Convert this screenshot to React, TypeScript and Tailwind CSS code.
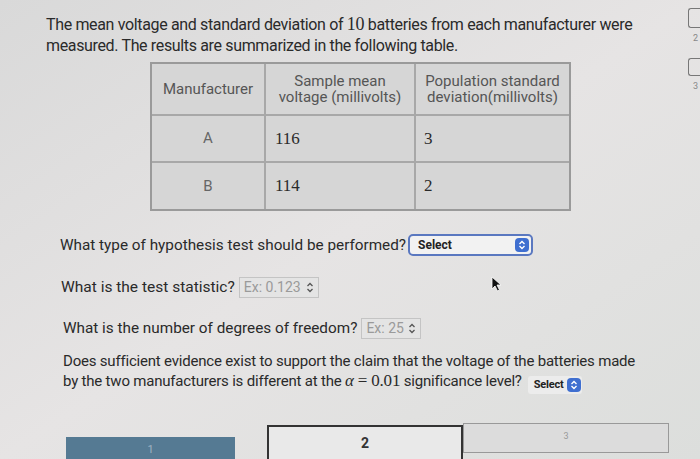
import React from "react";

function Stepper() {
  return (
    <svg width="8" height="11" viewBox="0 0 8 11" className="ml-1 shrink-0">
      <path d="M1.5 4 L4 1.5 L6.5 4" fill="none" stroke="#555" strokeWidth="1.3" />
      <path d="M1.5 7 L4 9.5 L6.5 7" fill="none" stroke="#555" strokeWidth="1.3" />
    </svg>
  );
}

function BlueStepper({ size = 14 }: { size?: number }) {
  return (
    <span
      className="flex items-center justify-center rounded-[4px] bg-[#3f6fd0]"
      style={{ width: size, height: size }}
    >
      <svg width="8" height="10" viewBox="0 0 8 10">
        <path d="M1.5 4 L4 1.5 L6.5 4" fill="none" stroke="#fff" strokeWidth="1.4" />
        <path d="M1.5 6 L4 8.5 L6.5 6" fill="none" stroke="#fff" strokeWidth="1.4" />
      </svg>
    </span>
  );
}

function NumInput({ placeholder, width }: { placeholder: string; width: string }) {
  return (
    <span
      className={`ml-1 inline-flex h-[21px] items-center border border-[#c4c4c4] bg-[#e4e4e4] px-1 text-[14px] text-[#9a9a9a] ${width}`}
    >
      <span className="flex-1">{placeholder}</span>
      <Stepper />
    </span>
  );
}

const serif = { fontFamily: '"Liberation Serif", "DejaVu Serif", serif' };

export default function App() {
  return (
    <div
      className="relative h-[459px] w-[700px] overflow-hidden bg-gradient-to-br from-[#d9d9d9] via-[#e6e4e4] to-[#dcdedc] text-[#2a2a2a]"
      style={{ fontFamily: 'Roboto, "Liberation Sans", sans-serif' }}
    >
      {/* Right side question rail */}
      <div className="absolute right-0 top-[8px] flex flex-col items-end gap-[4px] text-[9px] text-[#888]">
        <div className="h-[20px] w-[12px] rounded-l-[3px] border border-r-0 border-[#777]" />
        <div className="mr-[2px]">2</div>
        <div className="mt-[8px] h-[18px] w-[12px] rounded-l-[3px] border border-r-0 border-[#777]" />
        <div className="mr-[2px]">3</div>
      </div>

      <div className="pl-[46px] pt-[14px] pr-[40px]">
        <p className="text-[16px] leading-[21px] tracking-[-0.35px]">
          The mean voltage and standard deviation of <span style={serif} className="text-[18px]">10</span> batteries
          from each manufacturer were measured. The results are summarized in the following table.
        </p>
      </div>

      {/* Table */}
      <div className="ml-[150px] mt-[6px] w-[421px] border-2 border-[#9a9a9a] bg-[#d6d6d6]">
        <div className="grid grid-cols-[114px_150px_1fr]">
          <div className="flex h-[52px] items-center justify-center border-b-2 border-r-2 border-[#a8a8a8] text-[15px] text-[#555]">
            Manufacturer
          </div>
          <div className="flex h-[52px] flex-col items-center justify-center border-b-2 border-r-2 border-[#a8a8a8] text-[15px] leading-[16px] text-[#555]">
            <span>Sample mean</span>
            <span>voltage (millivolts)</span>
          </div>
          <div className="flex h-[52px] flex-col items-center justify-center border-b-2 border-[#a8a8a8] text-[15px] leading-[16px] text-[#555]">
            <span>Population standard</span>
            <span>deviation(millivolts)</span>
          </div>

          <div className="flex h-[47px] items-center justify-center border-b-2 border-r-2 border-[#a8a8a8] text-[15px] text-[#666]">
            A
          </div>
          <div className="flex h-[47px] items-center border-b-2 border-r-2 border-[#a8a8a8] pl-[9px] text-[17px]" style={serif}>
            116
          </div>
          <div className="flex h-[47px] items-center border-b-2 border-[#a8a8a8] pl-[8px] text-[17px]" style={serif}>
            3
          </div>

          <div className="flex h-[46px] items-center justify-center border-r-2 border-[#a8a8a8] text-[15px] text-[#666]">
            B
          </div>
          <div className="flex h-[46px] items-center border-r-2 border-[#a8a8a8] pl-[9px] text-[17px]" style={serif}>
            114
          </div>
          <div className="flex h-[46px] items-center pl-[8px] text-[17px]" style={serif}>
            2
          </div>
        </div>
      </div>

      {/* Questions */}
      <div className="ml-[60px] mt-[23px] flex items-center text-[15.3px]">
        <span>What type of hypothesis test should be performed?</span>
        <span className="ml-[2px] flex h-[22px] w-[125px] items-center justify-between rounded-[5px] border-2 border-[#5a78c0] bg-[#f2f2f2] pl-[8px] pr-[2px] text-[12px] font-bold text-[#222]">
          Select
          <BlueStepper size={14} />
        </span>
      </div>

      {/* cursor */}
      <svg className="absolute left-[491px] top-[276px]" width="12" height="16" viewBox="0 0 12 16">
        <path d="M1 1 L1 13 L4 10 L6.5 15 L8.5 14 L6 9 L10 9 Z" fill="#111" stroke="#fff" strokeWidth="0.8" />
      </svg>

      <div className="ml-[61px] mt-[19px] flex items-center text-[15.5px]">
        <span>What is the test statistic?</span>
        <NumInput placeholder="Ex: 0.123" width="w-[80px]" />
      </div>

      <div className="ml-[63px] mt-[18px] flex items-center text-[15.3px]">
        <span>What is the number of degrees of freedom?</span>
        <NumInput placeholder="Ex: 25" width="w-[60px]" />
      </div>

      <div className="ml-[63px] mt-[11px] w-[578px] text-[15px] leading-[20px] tracking-[-0.2px]">
        Does sufficient evidence exist to support the claim that the voltage of the batteries made by the two
        manufacturers is different at the{" "}
        <span style={serif} className="text-[17px]">
          <i>α</i> = 0.01
        </span>{" "}
        significance level?
        <span className="ml-[6px] inline-flex h-[18px] translate-y-[2px] items-center gap-[3px] rounded-[3px] bg-[#ececec] pl-[6px] pr-[1px] align-baseline text-[11px] font-bold text-[#222]">
          Select
          <BlueStepper size={14} />
        </span>
      </div>

      {/* Bottom tabs */}
      <div className="absolute bottom-0 left-[66px] flex items-end">
        <div className="flex h-[22px] w-[169px] items-center justify-center bg-[#557a93] pt-[4px] text-[11px] text-[#9fb3c2]">
          1
        </div>
        <div className="ml-[32px] flex h-[34px] w-[196px] items-center justify-center border-2 border-b-0 border-[#333] bg-[#e9e9e9] text-[14px] font-bold text-[#333]">
          2
        </div>
        <div className="mb-[6px] flex h-[30px] w-[206px] items-start justify-center border border-[#999] bg-[#dcdcdc] pt-[6px] text-[9px] text-[#999]">
          3
        </div>
      </div>
    </div>
  );
}
